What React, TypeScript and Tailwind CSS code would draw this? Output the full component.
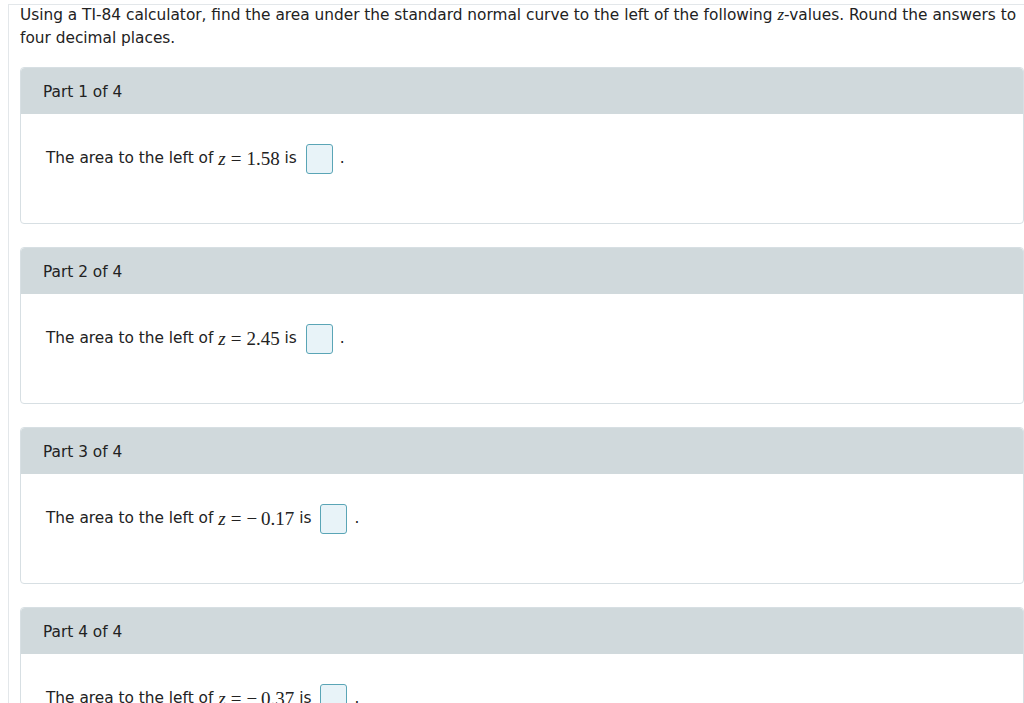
const parts = [
  { n: 1, neg: false, v: '1.58' },
  { n: 2, neg: false, v: '2.45' },
  { n: 3, neg: true, v: '0.17' },
  { n: 4, neg: true, v: '0.37' },
];

const Part = ({ n, neg, v }: { n: number; neg: boolean; v: string }) => (
  <div className="mb-[23px] rounded-[4px] border border-[#d7dfe3] bg-white">
    <div className="flex h-[46px] items-center rounded-t-[4px] bg-[#d0d9dc] pl-[22px] pt-[3px] text-[15.35px] text-[#222]">
      Part {n} of 4
    </div>
    <div className="h-[109px] pl-[25px] pt-[30px]">
      <div className="flex items-center text-[15.35px] text-[#222]">
        <span>The area to the left of&nbsp;</span>
        <span className="font-['Liberation_Serif',serif] text-[19px]">
          <i>z</i>
          <span className="mx-[5px]">=</span>
          {neg && <span className="mr-[4px]">{'\u2212'}</span>}
          {v}
        </span>
        <span>&nbsp;is</span>
        <span className="ml-[9px] inline-block h-[30px] w-[27px] rounded-[3px] border-[1.5px] border-[#5aa5b6] bg-[#e8f3f8]" />
        <span className="ml-[7px]">.</span>
      </div>
    </div>
  </div>
);

export default function App() {
  return (
    <div className="h-[703px] overflow-hidden bg-white font-['DejaVu_Sans',Verdana,sans-serif]">
      <div className="ml-[8px] mt-[4px] border-l border-t border-[#e3e7ea] pl-[11px]">
        <p className="-mt-[2px] text-[15.35px] leading-[23px] text-[#222]">
          Using a TI-84 calculator, find the area under the standard normal curve to the left of the following{' '}
          <i className="font-['Liberation_Serif',serif] text-[17px]">z</i>-values. Round the answers to four decimal places.
        </p>
        <div className="mt-[17px]">
          {parts.map((p) => (
            <Part key={p.n} {...p} />
          ))}
        </div>
      </div>
    </div>
  );
}
